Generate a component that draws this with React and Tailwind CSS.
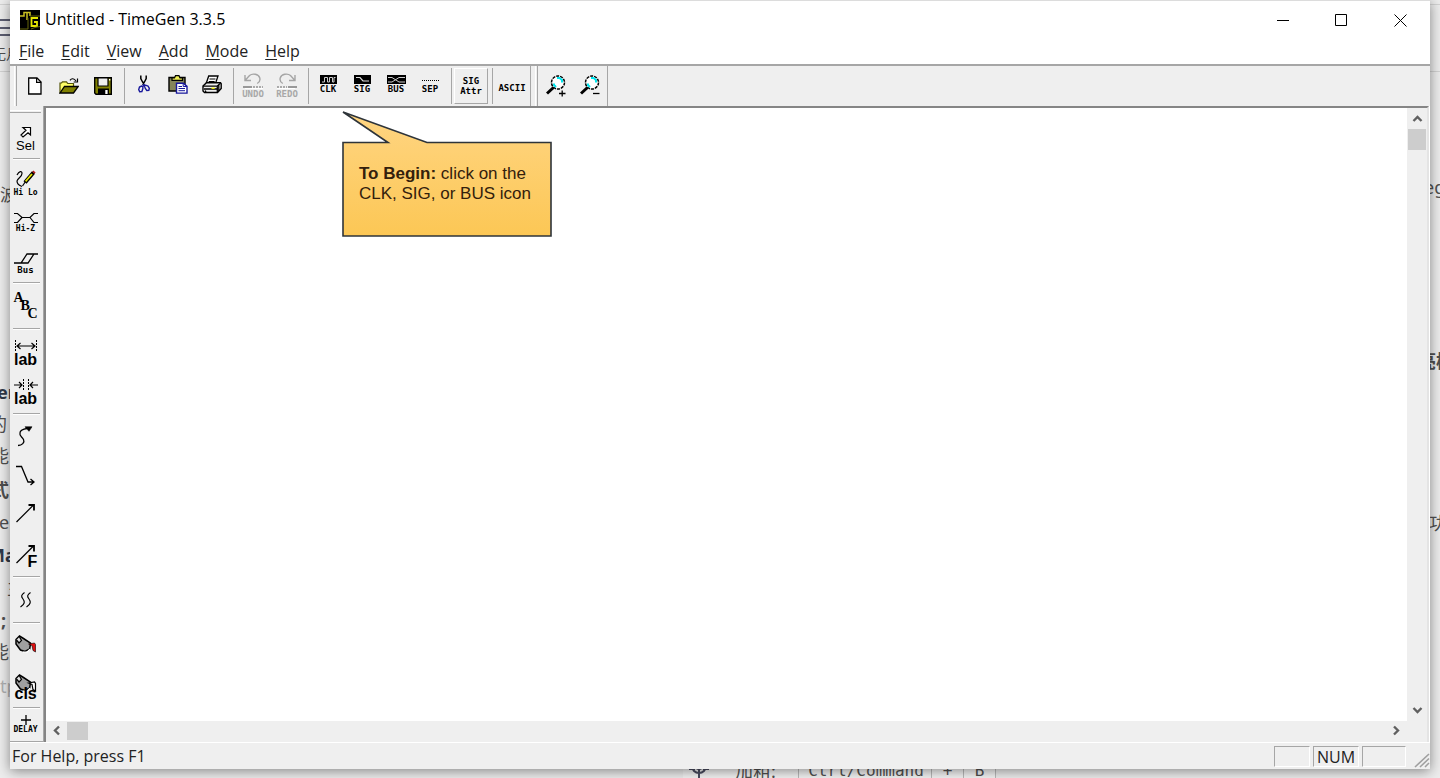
import React from 'react';

const Svg = ({ w, h, children }) => (
  <svg width={w} height={h} viewBox={`0 0 ${w} ${h}`} fill="none" stroke="#000" className="block shrink-0" aria-hidden="true">
    {children}
  </svg>
);

/* ---------- top toolbar icons ---------- */

const NewIcon = () => (
  <Svg w={14} h={18}>
    <path d="M.7 1h8.3l4 4v12H.7z" fill="#fff" strokeWidth="1.3" />
    <path d="M8.6 1v4.4h4.6" strokeWidth="1.2" />
  </Svg>
);

const OpenIcon = () => (
  <Svg w={20} h={18}>
    <path d="M1 16V6h1.5l1-1.2h4L8.7 6.500h5.800v3" fill="#ffff66" strokeWidth="1.200" stroke="#55550a" />
    <path d="M1 16L5.500 9.500h13.700L14.500 16z" fill="#808000" strokeWidth="1.300" />
    <path d="M11 3.300c1.500-2.200 4-2.200 6 .7M18.500 1.500V5h-3.800" strokeWidth="1.200" />
  </Svg>
);

const SaveIcon = () => (
  <Svg w={18} h={18}>
    <path d="M.7.700h16.600v16.600H2L.7 16z" fill="#808000" strokeWidth="1.400" />
    <path d="M4 1h10v8H4z" fill="#eee" strokeWidth="1.200" />
    <path d="M4 11.500h11V17H4z" fill="#000" stroke="none" />
    <path d="M11.300 13h2.300v4h-2.300zM15 2h1.300v1.500H15z" fill="#fff" stroke="none" />
  </Svg>
);

const CutIcon = () => (
  <Svg w={12} h={19}>
    <path d="M2.800.500v3l1.500 3 2 3.300M8.200.500v3l-1.500 3-2 3.300" strokeWidth="1.500" />
    <path d="M5.500 9v2.500M4.800 11.500l-1.300-.5-2 1-.8 2.500 1 2.300 2.200-.3 1-3zM6.200 10.500l1.300-.3 2.500.8 1.300 2.300-.5 2-2 .2-1.500-2z" stroke="#18189c" strokeWidth="1.400" />
  </Svg>
);

const PasteIcon = () => (
  <Svg w={20} h={19}>
    <path d="M1 2.500h16V16H1z" fill="#85855a" strokeWidth="1.400" />
    <path d="M4 5.300V3h2.500L7.500.700h3.500L12 3h2.500v2.300z" fill="#eeee55" strokeWidth="1.200" />
    <path d="M8.500 8.200h7l3.500 3.200v6.700H8.500z" fill="#fff" stroke="#18189c" strokeWidth="1.400" />
    <path d="M10.500 11.500h3.500M10.500 13.500h6.500M10.500 15.700h6.500M15.200 8.500v3H19" stroke="#18189c" />
  </Svg>
);

const PrintIcon = () => (
  <Svg w={20} h={19}>
    <path d="M4 9L6.700 1H16l-2.700 8" fill="#fff" strokeWidth="1.300" />
    <path d="M7.500 4h6M6.700 6.500h6" />
    <path d="M1 11l3.500-3.300H18.500l.7 1v4.800L15.500 17.500H2.500L1 16z" fill="#eee" strokeWidth="1.400" />
    <path d="M1 11.200h14l3.500-3M15.300 11.500v6M2 14h13M4 17.500l-.7-2M16.800 10v6" strokeWidth="1.300" />
    <path d="M9.500 13.200h3.200" stroke="#ffff00" strokeWidth="1.300" />
  </Svg>
);

const UndoIcon = () => (
  <Svg w={20} h={16}>
    <path d="M2 2v5.500h6M2.500 7l4-4.500c3-2.500 9-1.500 10.200 2.300.8 2.700-.5 4.600-2.500 5.700" stroke="#a5a5a5" strokeWidth="1.400" />
    <path d="M0 14h9" stroke="#999" strokeWidth="2" />
    <path d="M10 14h10" stroke="#aaa" strokeWidth="2" strokeDasharray="2 1" />
    <path d="M2 15.500h18" stroke="#fff" />
  </Svg>
);

const RedoIcon = () => (
  <Svg w={20} h={16}>
    <path d="M18 2v5.500h-6M17.500 7l-4-4.500c-3-2.500-9-1.500-10.200 2.300-.8 2.700.5 4.600 2.500 5.700" stroke="#a5a5a5" strokeWidth="1.400" />
    <path d="M11 14h9" stroke="#999" strokeWidth="2" />
    <path d="M0 14h10" stroke="#aaa" strokeWidth="2" strokeDasharray="2 1" />
    <path d="M0 15.500h18" stroke="#fff" />
  </Svg>
);

const ClkIcon = () => (
  <Svg w={17} h={9}>
    <path d="M0 0h17v9H0z" fill="#000" stroke="none" />
    <path d="M2 7h2.500V2.500h3V7h2V2.500h3V7H14V2.500h1.500" stroke="#ccc" />
  </Svg>
);

const SigIcon = () => (
  <Svg w={17} h={9}>
    <path d="M0 0h17v9H0z" fill="#000" stroke="none" />
    <path d="M2 2.500h4L9 6h6" stroke="#ddd" strokeWidth="1.200" />
  </Svg>
);

const BusIcon = () => (
  <Svg w={19} h={9}>
    <path d="M0 0h19v9H0z" fill="#000" stroke="none" />
    <path d="M1 2.500h4l7 4.500h6M1 7h4l7-4.500h6" stroke="#ccc" />
  </Svg>
);

const SepIcon = () => (
  <Svg w={17} h={9}>
    <path d="M0 5.500h17" strokeDasharray="1 1" />
  </Svg>
);

const ZoomIcon = ({ plus }) => (
  <Svg w={20} h={23}>
    <circle cx="12" cy="7.500" r="6.500" fill="#fff" strokeWidth="1.500" strokeDasharray="3 1" />
    <path d="M11 3h2.500l2.500 2v2.500M8 8.500v1.500l2 2" stroke="#00e5ee" strokeWidth="2" />
    <path d="M7.500 12.500L1 18.500" strokeWidth="3" />
    <path d={plus ? 'M13 18.500h6.500M16.200 15.500v6' : 'M13 18.500h6.500'} strokeWidth="1.300" />
  </Svg>
);

/* ---------- side toolbar icons ---------- */

const SelIcon = () => (
  <Svg w={12} h={12}>
    <path d="M3 1.500h7.500V9L8 6.700 3 11 1 9l5-4.800z" fill="#fff" strokeWidth="1.200" />
  </Svg>
);

const HiLoIcon = () => (
  <Svg w={20} h={18}>
    <path d="M1 5c2-4 5-4.500 5-1.500C6 7 1.500 8 1 11c0 4 4 5 5 5.500" strokeWidth="1.200" />
    <path d="M17.500 2.500l-8.500 10" strokeWidth="4" />
    <path d="M16 4l-6.500 7.500" stroke="#e8e800" strokeWidth="1.800" />
    <path d="M18.500 1.500l-1.200 1.300" stroke="#b01818" strokeWidth="3" />
    <path d="M9.500 11.500l-3 4.500" strokeWidth="1.200" />
  </Svg>
);

const HiZIcon = () => (
  <Svg w={24} h={12}>
    <path d="M0 1.500h3.500L8 5.500h8l4-4h4M0 10.500h3.500L8 5.500M16 5.500l4 5h4" strokeWidth="1.200" />
  </Svg>
);

const BusEditIcon = () => (
  <Svg w={24} h={12}>
    <path d="M0 10h7l6-9h11M7 10h7l6-9" strokeWidth="1.300" />
  </Svg>
);

const WideIcon = () => (
  <Svg w={24} h={12}>
    <path d="M1.500 0v12M22.500 0v12" strokeDasharray="2 1" />
    <path d="M3 6h18M6.500 3L3 6l3.500 3M17.500 3L21 6l-3.500 3" strokeWidth="1.200" />
  </Svg>
);

const NarrowIcon = () => (
  <Svg w={24} h={12}>
    <path d="M9.500 0v12M14.500 0v12" strokeDasharray="2 1" />
    <path d="M0 6h8M24 6h-8M5 3l3 3-3 3M19 3l-3 3 3 3" strokeWidth="1.200" />
  </Svg>
);

const CurveIcon = () => (
  <Svg w={16} h={21}>
    <path d="M0 19.500c4 0 7-3 5.500-6S1 10 2 6.500C2.500 4 6 3 9 2.500" strokeWidth="1.300" />
    <path d="M7 .800h7l-3 4.500z" fill="#000" strokeWidth=".6" />
  </Svg>
);

const StepIcon = () => (
  <Svg w={20} h={21}>
    <path d="M0 1.500h5.500L12 17h6M14.500 14l3.500 3-3.500 3" strokeWidth="1.300" />
  </Svg>
);

const LineIcon = () => (
  <Svg w={20} h={20}>
    <path d="M.5 19L18 1.500" strokeWidth="1.200" />
    <path d="M12.500 2H18v5.500" strokeWidth="1.800" />
  </Svg>
);

const SquiggleIcon = () => (
  <Svg w={12} h={16}>
    <path d="M4.500.500C1 3 1 4.500 3 7s2 5-2.500 8M10.500.500C7 3 7 4.500 9 7s2 5-2.500 8" strokeWidth="1.200" />
  </Svg>
);

const BucketIcon = ({ spill }) => (
  <Svg w={22} h={18}>
    <path d="M1 4.500L4.500 1l4 2.500L15.500 8l-.8 6L10 16.500 5.500 15 1 9z" fill="#a0a0a0" strokeWidth="1.500" />
    <path d="M1.500 5l2.500 3 2.500-2.500L4.500 2" strokeWidth="1.200" fill="#ddd" />
    <path d="M8 17.200h4l3-3" stroke="#fff" strokeWidth="1.200" />
    <path d="M13.500 9l6-1 1 1.500v7.500L18 15.500 17 10.500z" fill={spill} strokeWidth={spill === '#fff' ? 1.2 : 0.6} />
  </Svg>
);

const PlusIcon = () => (
  <Svg w={10} h={10}>
    <path d="M0 5h10M5 0v10" strokeWidth="1.300" />
  </Svg>
);

const AbcIcon = () => (
  <span className="flex pr-[3px] pb-[3px] font-['Liberation_Serif',serif] text-[14px] font-bold leading-4">
    <span className="w-[7px] pb-4">A</span>
    <span className="w-[7px] pt-2 pb-2">B</span>
    <span className="w-[7px] pt-4">C</span>
  </span>
);

const Arrow = ({ dir }) => {
  const paths = {
    up: 'M1.500 8L5.500 4l4 4',
    down: 'M1.500 3l4 4 4-4',
    left: 'M8 1.500L4 5.500l4 4',
    right: 'M3 1.500l4 4-4 4',
  };
  return (
    <Svg w={11} h={11}>
      <path d={paths[dir]} stroke="#606060" strokeWidth="2.400" />
    </Svg>
  );
};

/* ---------- building blocks ---------- */

const Tiny = ({ children }) => (
  <span className="font-['DejaVu_Sans_Mono',monospace] text-[9px] leading-[10px] font-bold">{children}</span>
);

const SideTiny = ({ children }) => (
  <span className="font-['DejaVu_Sans_Mono',monospace] text-[8px] leading-[10px] font-bold whitespace-nowrap">{children}</span>
);

const Lab = ({ children }) => (
  <span className="font-['Liberation_Sans',sans-serif] text-[16px] leading-4 font-bold">{children}</span>
);

const ToolButton = ({ name, children, className = '' }) => (
  <button type="button" aria-label={name} className={`flex h-9 w-[34px] shrink-0 flex-col items-center justify-center ${className}`}>
    {children}
  </button>
);

const Divider = () => <div className="mr-[2px] ml-1 h-9 w-px shrink-0 border-l border-[#a6a6a6] bg-white" />;

const Grip = () => <div className="mr-[1px] ml-[4px] h-10 w-[3px] shrink-0 border-r border-l border-l-white border-r-[#a6a6a6]" />;

const SideButton = ({ name, children, className = '' }) => (
  <button type="button" aria-label={name} className={`flex h-[39px] w-full shrink-0 flex-col items-center justify-center ${className}`}>
    {children}
  </button>
);

const SideDivider = () => <div className="mr-px ml-[3px] mt-px mb-1 h-[2px] shrink-0 border-t border-[#a6a6a6] bg-white" />;

const MENU = ['File', 'Edit', 'View', 'Add', 'Mode', 'Help'];

const LEFT_BITS = [
  { text: '无月', className: 'top-[42px] -left-[8px] text-[14px]' },
  { text: '波', className: 'top-[183px] left-0 text-[17px]' },
  { text: 'en', className: 'top-[380px] -left-[3px] text-[18px] font-bold text-[#303848]' },
  { text: '的', className: 'top-[412px] -left-[11px] text-[18px]' },
  { text: '能', className: 'top-[444px] -left-[9px] text-[18px]' },
  { text: '式', className: 'top-[478px] -left-[9px] text-[18px] font-bold' },
  { text: 'e', className: 'top-[510px] -left-[1px] text-[18px]' },
  { text: 'Ma', className: 'top-[543px] -left-[12px] text-[18px] font-bold text-[#303848]' },
  { text: '主', className: 'top-[576px] left-[7px] text-[18px]' },
  { text: ';', className: 'top-[608px] left-[1px] text-[18px] font-bold' },
  { text: '能', className: 'top-[640px] -left-[9px] text-[18px]' },
  { text: 'tp', className: 'top-[674px] left-0 text-[18px] text-[#b0b0b0]' },
];

const RIGHT_BITS = [
  { text: 'eg', className: 'top-[175px] -left-[6px] text-[18px]' },
  { text: '亮模', className: 'top-[349px] -left-[12px] text-[18px] font-bold' },
  { text: '功', className: 'top-[511px] -left-px text-[18px]' },
];

// Document open behind the application window
const Backdrop = () => (
  <div aria-hidden="true" className="absolute inset-0 overflow-hidden bg-[#ededed] font-['Noto_Sans','Noto_Sans_CJK_SC',sans-serif] leading-6 text-[#505050]">
    <div className="absolute inset-x-0 top-1 h-[68px] border-y border-[#d2d2d2]" />
    <div className="absolute top-[19px] left-0 h-[17px] w-[11px] border-y-2 border-[#5b5d70]">
      <div className="mt-[6px] h-[2px] bg-[#5b5d70]" />
    </div>
    <div className="absolute inset-y-0 left-0 w-[10px] overflow-hidden">
      {LEFT_BITS.map((b, i) => (
        <span key={i} className={`absolute whitespace-nowrap ${b.className}`}>{b.text}</span>
      ))}
    </div>
    <div className="absolute inset-y-0 right-0 w-[10px] overflow-hidden">
      {RIGHT_BITS.map((b, i) => (
        <span key={i} className={`absolute whitespace-nowrap ${b.className}`}>{b.text}</span>
      ))}
    </div>
    <div className="absolute bottom-0 left-[683px] flex h-5 items-end bg-[#f4f4f4] pl-1.5">
      <svg width="20" height="20" viewBox="0 0 20 20" fill="none" stroke="#4a4c60" strokeWidth="2">
        <circle cx="10" cy="8" r="7" />
        <circle cx="10" cy="8" r="3" />
        <path d="M10 11v9M0 11h6M14 11h6" />
      </svg>
      <span className="-mb-[5px] ml-[26px] w-[63px] text-[18px]">加粗:</span>
      <span className="flex h-5 items-end border-x border-[#bbb] font-['DejaVu_Sans_Mono',monospace] text-[16px]">
        <span className="-mb-[5px] w-[132px] pl-[2px] text-center">Ctrl/Command</span>
        <span className="-mb-[5px] w-8 border-l border-[#bbb] text-center">+</span>
        <span className="-mb-[5px] w-8 border-l border-[#bbb] text-center">B</span>
      </span>
    </div>
  </div>
);

const TitleBar = () => (
  <header className="flex h-[39px] shrink-0 items-center border-t border-[#dcdcdc] pl-[10px]">
    <svg width="20" height="20" viewBox="0 0 20 20" fill="none" stroke="#e6e600" strokeWidth="1.500" className="shrink-0" aria-hidden="true">
      <path d="M0 0h20v20H0z" fill="#000" stroke="none" />
      <path d="M0 6h4V2.500h6V6M7 2.500V10" stroke="#c8c020" />
      <path d="M18 8h-6.500v8H17v-4h-3" strokeWidth="1.800" />
      <path d="M8 8v11H0M10 6h10M11 19l4-1.500 5-1" stroke="#66660a" strokeWidth="1" />
    </svg>
    <h1 className="ml-[5px] flex-1 pb-0.5 text-[16px] leading-5 text-black">Untitled - TimeGen 3.3.5</h1>
    <button type="button" aria-label="Minimize" className="flex h-full w-[58px] items-center justify-center">
      <Svg w={13} h={13}><path d="M0 6.500h12" /></Svg>
    </button>
    <button type="button" aria-label="Maximize" className="flex h-full w-[58px] items-center justify-center">
      <Svg w={13} h={13}><path d="M.500.500h11v11H.500z" /></Svg>
    </button>
    <button type="button" aria-label="Close" className="flex h-full w-[60px] items-center justify-center">
      <Svg w={13} h={13}><path d="M.500.500l12 12M12.500.500l-12 12" /></Svg>
    </button>
  </header>
);

const MenuBar = () => (
  <nav className="flex h-[25px] shrink-0 items-center gap-[17px] pb-0.5 pl-[9px]">
    {MENU.map((m) => (
      <button key={m} type="button" className="text-[16px] leading-5 text-[#222]">
        <span className="underline underline-offset-2">{m[0]}</span>{m.slice(1)}
      </button>
    ))}
  </nav>
);

const TopToolbar = () => (
  <div role="toolbar" className="flex h-[42px] shrink-0 items-center border-t-2 border-[#a6a6a6] bg-[#efefef]">
    <Grip />
    <ToolButton name="New"><NewIcon /></ToolButton>
    <ToolButton name="Open"><OpenIcon /></ToolButton>
    <ToolButton name="Save"><SaveIcon /></ToolButton>
    <Divider />
    <ToolButton name="Cut" className="pb-1"><CutIcon /></ToolButton>
    <ToolButton name="Paste" className="pb-1"><PasteIcon /></ToolButton>
    <ToolButton name="Print" className="pb-1"><PrintIcon /></ToolButton>
    <Divider />
    <ToolButton name="Undo" className="text-[#a8a8a8]"><UndoIcon /><Tiny>UNDO</Tiny></ToolButton>
    <ToolButton name="Redo" className="text-[#a8a8a8]"><RedoIcon /><Tiny>REDO</Tiny></ToolButton>
    <Divider />
    <ToolButton name="Add clock" className="pb-1"><ClkIcon /><Tiny>CLK</Tiny></ToolButton>
    <ToolButton name="Add signal" className="pb-1"><SigIcon /><Tiny>SIG</Tiny></ToolButton>
    <ToolButton name="Add bus" className="pb-1"><BusIcon /><Tiny>BUS</Tiny></ToolButton>
    <ToolButton name="Add separator" className="pb-1"><SepIcon /><Tiny>SEP</Tiny></ToolButton>
    <Divider />
    <ToolButton name="Signal attributes" className="border border-t-white border-r-[#a6a6a6] border-b-[#a6a6a6] border-l-white">
      <Tiny>SIG</Tiny><Tiny>Attr</Tiny>
    </ToolButton>
    <Divider />
    <ToolButton name="ASCII" className="pt-1"><Tiny>ASCII</Tiny></ToolButton>
    <div className="h-10 w-[2px] shrink-0 border-r border-[#a6a6a6]" />
    <Grip />
    <ToolButton name="Zoom in"><ZoomIcon plus /></ToolButton>
    <ToolButton name="Zoom out"><ZoomIcon /></ToolButton>
    <div className="h-10 w-px shrink-0 bg-[#a6a6a6]" />
  </div>
);

const SideToolbar = () => (
  <div role="toolbar" className="flex w-[34px] shrink-0 flex-col border-r border-b border-[#a6a6a6] pr-[2px]">
    <div className="mt-1 mb-[5px] h-[3px] shrink-0 border-y border-t-white border-b-[#a6a6a6]" />
    <SideButton name="Select" className="pt-1"><SelIcon /><span className="font-['Liberation_Sans',sans-serif] text-[13px] leading-4">Sel</span></SideButton>
    <SideDivider />
    <SideButton name="High low"><HiLoIcon /><SideTiny>Hi Lo</SideTiny></SideButton>
    <SideButton name="High impedance"><HiZIcon /><SideTiny>Hi-Z</SideTiny></SideButton>
    <SideButton name="Bus edit" className="pt-1"><BusEditIcon /><Tiny>Bus</Tiny></SideButton>
    <SideDivider />
    <SideButton name="Text"><AbcIcon /></SideButton>
    <SideDivider />
    <SideButton name="Wide label"><WideIcon /><Lab>lab</Lab></SideButton>
    <SideButton name="Narrow label"><NarrowIcon /><Lab>lab</Lab></SideButton>
    <SideDivider />
    <SideButton name="Curved arrow" className="pb-1"><CurveIcon /></SideButton>
    <SideButton name="Stepped arrow" className="pb-1"><StepIcon /></SideButton>
    <SideButton name="Straight arrow" className="pb-2"><LineIcon /></SideButton>
    <SideButton name="Free arrow" className="pb-1">
      <span className="relative">
        <LineIcon />
        <span className="absolute top-2 left-3 font-['Liberation_Sans',sans-serif] text-[16px] leading-5 font-bold">F</span>
      </span>
    </SideButton>
    <SideDivider />
    <SideButton name="Break" className="pb-1"><SquiggleIcon /></SideButton>
    <SideDivider />
    <SideButton name="Fill" className="pb-2"><BucketIcon spill="#e01010" /></SideButton>
    <SideButton name="Clear fill">
      <span className="relative pb-2">
        <BucketIcon spill="#fff" />
        <span className="absolute inset-x-0 bottom-0 text-center font-['Liberation_Sans',sans-serif] text-[16px] leading-3 font-bold">cls</span>
      </span>
    </SideButton>
    <SideDivider />
    <button type="button" aria-label="Delay" className="flex h-6 w-full shrink-0 flex-col items-center justify-center">
      <PlusIcon /><SideTiny>DELAY</SideTiny>
    </button>
  </div>
);

const Callout = () => (
  <div className="absolute top-0 left-[294px] h-[132px] w-[214px] font-['Liberation_Sans',sans-serif]">
    <svg width="214" height="132" viewBox="0 0 214 132" className="absolute inset-0" aria-hidden="true">
      <defs>
        <linearGradient id="callout" x1="0" y1="0" x2="0" y2="1">
          <stop offset="0" stopColor="#ffd582" />
          <stop offset="1" stopColor="#fcc755" />
        </linearGradient>
      </defs>
      <path d="M3 4L87 34.500H211V128H3V34.500H48z" fill="url(#callout)" stroke="#2e343a" strokeWidth="1.600" />
    </svg>
    <p className="relative pt-[56px] pl-[19px] text-[17px] leading-5 whitespace-nowrap text-[#33200c]">
      <b>To Begin:</b> click on the<br />CLK, SIG, or BUS icon
    </p>
  </div>
);

const Workspace = () => (
  <main className="flex min-w-0 flex-1 flex-col border-t-2 border-r-2 border-l-2 border-t-[#858585] border-r-[#e4e4e4] border-l-[#858585]">
    <div className="flex min-h-0 flex-1">
      <div className="relative flex-1 bg-white">
        <Callout />
      </div>
      <div className="flex w-5 flex-col items-center bg-[#efefef]">
        <button type="button" aria-label="Scroll up" className="flex h-[21px] items-center"><Arrow dir="up" /></button>
        <div className="h-[21px] w-[18px] bg-[#cdcdcd]" />
        <button type="button" aria-label="Scroll down" className="mt-auto flex h-[21px] items-center"><Arrow dir="down" /></button>
      </div>
    </div>
    <div className="flex h-[21px] shrink-0 items-center bg-[#efefef] pr-5 pb-[2px]">
      <button type="button" aria-label="Scroll left" className="flex w-[21px] justify-center"><Arrow dir="left" /></button>
      <div className="h-[18px] w-[21px] bg-[#cdcdcd]" />
      <button type="button" aria-label="Scroll right" className="ml-auto flex w-[21px] justify-center"><Arrow dir="right" /></button>
    </div>
  </main>
);

const StatusBar = () => (
  <footer className="flex h-[27px] shrink-0 items-center gap-[3px] border-t border-white pl-[2px] text-[16px] leading-5 text-[#222]">
    <span className="flex-1">For Help, press F1</span>
    <span className="h-[21px] w-9 border border-t-[#a6a6a6] border-r-white border-b-white border-l-[#a6a6a6]" />
    <span className="h-[21px] w-[46px] border border-t-[#a6a6a6] border-r-white border-b-white border-l-[#a6a6a6] text-center">NUM</span>
    <span className="h-[21px] w-11 border border-t-[#a6a6a6] border-r-white border-b-white border-l-[#a6a6a6]" />
    <span className="ml-[5px] self-end">
      <Svg w={16} h={16}>
        <path d="M1 14L15 1M6 14l9-8.500M11 14l4-4" stroke="#a0a0a0" strokeWidth="1.600" />
      </Svg>
    </span>
  </footer>
);

export default function App() {
  return (
    <div className="relative flex h-screen overflow-hidden px-[10px] pb-[9px] font-['Open_Sans',sans-serif]">
      <Backdrop />
      <div className="relative flex min-w-0 flex-1 flex-col bg-white shadow-[0_2px_12px_rgba(0,0,0,0.45)]">
        <TitleBar />
        <MenuBar />
        <TopToolbar />
        <div className="flex min-h-0 flex-1 border-r border-white bg-[#efefef]">
          <SideToolbar />
          <Workspace />
        </div>
        <div className="bg-[#efefef]">
          <StatusBar />
        </div>
      </div>
    </div>
  );
}
